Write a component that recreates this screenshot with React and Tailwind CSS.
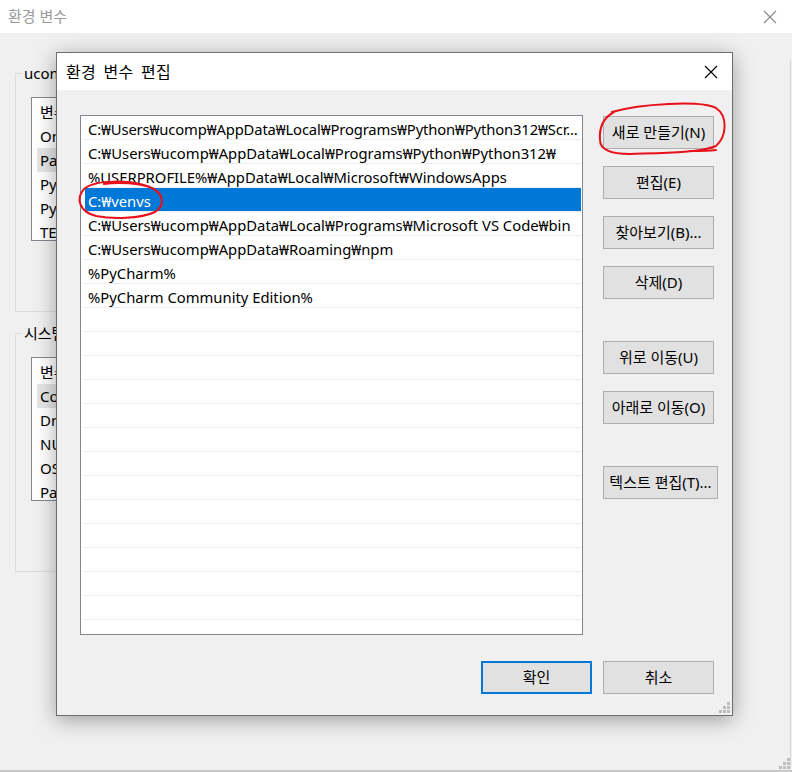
import React from "react"

const FONT = { fontFamily: '"Noto Sans", "Noto Sans CJK KR", sans-serif' }

const PATHS = [
  "C:₩Users₩ucomp₩AppData₩Local₩Programs₩Python₩Python312₩Scr...",
  "C:₩Users₩ucomp₩AppData₩Local₩Programs₩Python₩Python312₩",
  "%USERPROFILE%₩AppData₩Local₩Microsoft₩WindowsApps",
  "C:₩venvs",
  "C:₩Users₩ucomp₩AppData₩Local₩Programs₩Microsoft VS Code₩bin",
  "C:₩Users₩ucomp₩AppData₩Roaming₩npm",
  "%PyCharm%",
  "%PyCharm Community Edition%",
]

const SELECTED = 3

function CloseIcon({ className }) {
  return (
    <svg width="14" height="14" viewBox="0 0 14 14" className={className}>
      <path d="M1 1 L13 13 M13 1 L1 13" stroke="currentColor" strokeWidth="1.2" fill="none" />
    </svg>
  )
}

function Grip() {
  return (
    <svg width="11" height="11" viewBox="0 0 11 11">
      <g fill="#bdbdbd">
        <rect x="8" y="0" width="3" height="3" />
        <rect x="4" y="4" width="3" height="3" />
        <rect x="8" y="4" width="3" height="3" />
        <rect x="0" y="8" width="3" height="3" />
        <rect x="4" y="8" width="3" height="3" />
        <rect x="8" y="8" width="3" height="3" />
      </g>
    </svg>
  )
}

function Button({ children, className = "", primary }) {
  return (
    <div
      className={
        "h-[33px] w-[111px] flex items-center justify-center bg-[#e1e1e1] text-[15px] text-black " +
        (primary ? "border-2 border-[#0078d7] " : "border border-[#adadad] ") +
        className
      }
    >
      {children}
    </div>
  )
}

function BgList({ header, rows, highlight }) {
  return (
    <div className="mt-[23px] ml-[15px] h-[144px] w-[520px] border border-[#828790] bg-white pt-[2px] pl-[5px] overflow-hidden">
      <div className="h-6 flex items-center pl-[3px] text-[15px]">{header}</div>
      {rows.map((r, i) => (
        <div
          key={i}
          className={"h-6 flex items-center pl-[3px] text-[15px] " + (i === highlight ? "bg-[#e5e5e5]" : "")}
        >
          {r}
        </div>
      ))}
    </div>
  )
}

function GroupBox({ label, children, className = "" }) {
  return (
    <div className={"relative ml-[15px] w-[640px] h-[239px] border border-[#dcdcdc] " + className}>
      <div className="absolute -top-[12px] left-[6px] bg-[#f0f0f0] px-[2px] text-[15px] leading-[22px]">{label}</div>
      {children}
    </div>
  )
}

export default function App() {
  return (
    <div className="relative w-[792px] h-[772px] overflow-hidden bg-[#f0f0f0] text-black" style={FONT}>
      {/* background window: 환경 변수 */}
      <div className="h-[33px] bg-white flex items-center pl-[8px] pr-[15px]">
        <span className="text-[15px] text-[#999999]">환경 변수</span>
        <CloseIcon className="ml-auto text-[#8a8a8a]" />
      </div>

      <GroupBox label="ucomp에 대한 사용자 변수(U)" className="mt-[40px]">
        <BgList header="변수" rows={["OneDrive", "Path", "PyCharm", "PyCharm Community Edition", "TEMP"]} highlight={1} />
      </GroupBox>
      <GroupBox label="시스템 변수(S)" className="mt-[21px]">
        <BgList header="변수" rows={["ComSpec", "DriverData", "NUMBER_OF_PROCESSORS", "OS", "Path"]} highlight={0} />
      </GroupBox>

      <div className="absolute right-[1px] top-[60px] bottom-[4px] w-px bg-[#d6d6d6]" />
      <div className="absolute left-0 right-0 bottom-0 h-[2px] bg-[#c8c8c8]" />
      <div className="absolute right-[2px] bottom-[3px]">
        <Grip />
      </div>

      {/* foreground dialog: 환경 변수 편집 */}
      <div className="absolute left-[56px] top-[52px] w-[677px] h-[664px] border border-[#6e6e6e] bg-[#f0f0f0] shadow-[0_4px_20px_rgba(0,0,0,0.35)] flex flex-col">
        <div className="h-[37px] bg-white flex items-center pl-[9px] pr-[14px]">
          <span className="text-[16px] tracking-[0.3px] [word-spacing:3px]">환경 변수 편집</span>
          <CloseIcon className="ml-auto text-black" />
        </div>

        <div className="flex flex-1 pt-[25px] pl-[23px]">
          <div className="w-[503px] h-[520px] border border-[#828790] bg-white overflow-hidden">
            {Array.from({ length: 22 }).map((_, i) => {
              const text = PATHS[i]
              const sel = i === SELECTED
              return (
                <div key={i} className="h-6 pl-[4px] pr-[1px]">
                  <div
                    className={
                      "h-[23px] pt-[4px] flex items-center pl-[3px] text-[14.8px] whitespace-nowrap overflow-hidden " +
                      (sel ? "bg-[#0078d7] text-white " : "") +
                      (i === 0 ? "tracking-[-0.15px]" : "")
                    }
                  >
                    {text}
                  </div>
                  <div className="h-px ml-[-2px] bg-[#ececec]" />
                </div>
              )
            })}
          </div>

          <div className="flex flex-col ml-[20px] pt-px">
            <Button>새로 만들기(N)</Button>
            <Button className="mt-[17px]">편집(E)</Button>
            <Button className="mt-[17px]">찾아보기(B)...</Button>
            <Button className="mt-[17px]">삭제(D)</Button>
            <Button className="mt-[42px]">위로 이동(U)</Button>
            <Button className="mt-[17px]">아래로 이동(O)</Button>
            <Button className="mt-[42px] w-[115px]">텍스트 편집(T)...</Button>
          </div>
        </div>

        <div className="flex justify-end gap-[11px] pr-[18px] pb-[21px]">
          <Button primary>확인</Button>
          <Button>취소</Button>
        </div>
        <div className="absolute right-[2px] bottom-[2px]">
          <Grip />
        </div>
      </div>

      {/* red hand-drawn marks */}
      <svg className="absolute inset-0 pointer-events-none" width="792" height="772" viewBox="0 0 792 772">
        <g fill="none" stroke="#e8101a" strokeWidth="2" strokeLinecap="round">
          <path d="M612 112 C640 104 700 100 716 108 C728 116 727 136 716 146 C700 153 660 153 630 154 C612 154 600 150 600 140 C599 128 603 118 614 112" />
          <path d="M690 151 C698 151 708 151 716 150" />
          <path d="M150 187 C130 180 96 179 84 189 C75 199 80 212 96 216 C112 219 140 219 155 212 C165 206 164 194 152 188 C140 183 118 182 104 184" />
        </g>
      </svg>
    </div>
  )
}
